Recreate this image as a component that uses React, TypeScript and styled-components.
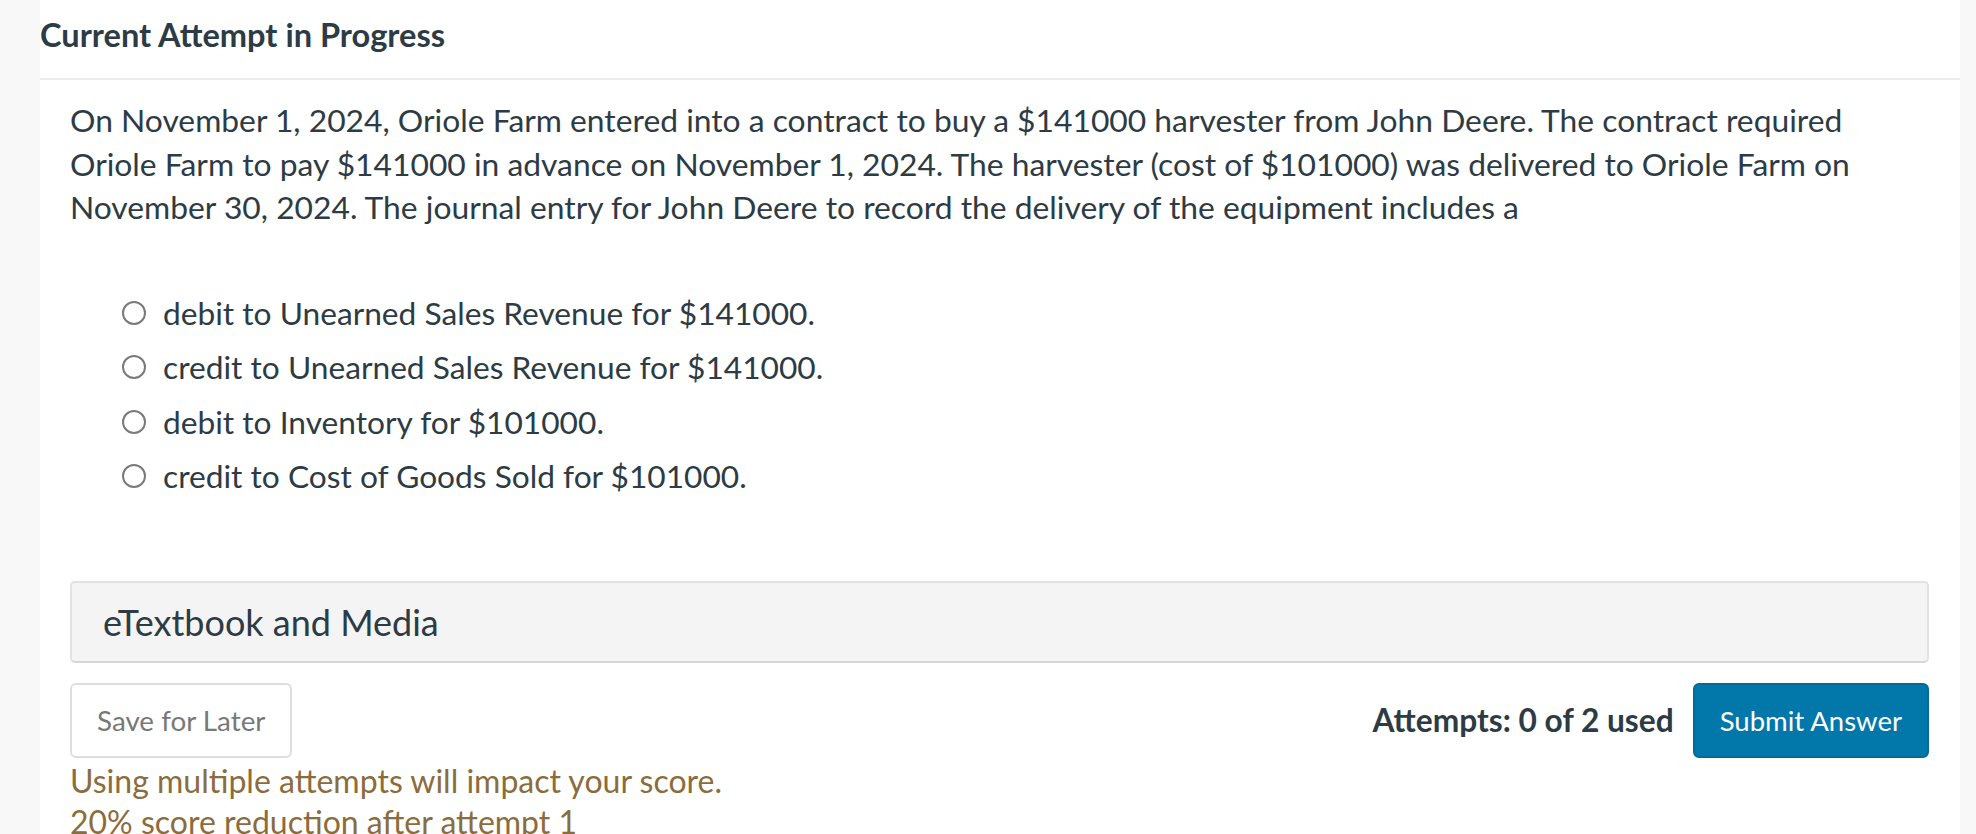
import styled, { createGlobalStyle } from 'styled-components';

const GlobalStyle = createGlobalStyle`
  html, body {
    margin: 0;
    padding: 0;
    background: #ffffff;
    font-family: Lato, "Open Sans", Arial, sans-serif;
    color: #2d3b45;
  }
  * {
    box-sizing: border-box;
  }
`;

const Page = styled.div`
  display: flex;
  width: 1976px;
  height: 834px;
  overflow: hidden;
  background: #ffffff;
`;

const Gutter = styled.div<{ $width: number }>`
  flex: 0 0 ${(p) => p.$width}px;
  background: #f8f8f8;
`;

const Main = styled.main`
  flex: 1;
  display: flex;
  flex-direction: column;
  min-width: 0;
`;

const Header = styled.header`
  height: 80px;
  flex: 0 0 auto;
  display: flex;
  align-items: center;
  padding: 0 0 9px 0;
  border-bottom: 2px solid #ececec;
`;

const Title = styled.h2`
  margin: 0;
  font-size: 32.6px;
  font-weight: 700;
  color: #2d3b45;
`;

const Body = styled.section`
  padding: 19px 31px 0 30px;
`;

const Question = styled.p`
  margin: 0;
  font-size: 31.8px;
  line-height: 43.5px;
  color: #2d3b45;
`;

const Options = styled.ul`
  list-style: none;
  margin: 56px 0 0 0;
  padding: 0 0 0 52px;
  display: flex;
  flex-direction: column;
`;

const Option = styled.li`
  display: flex;
  align-items: center;
  height: 54.5px;
  font-size: 31.7px;
  color: #2d3b45;
`;

const Radio = styled.input.attrs({ type: 'radio' })`
  appearance: none;
  margin: 0 17px 0 0;
  width: 24px;
  height: 24px;
  border: 2px solid #7a7a7a;
  border-radius: 50%;
  background: #ffffff;
  flex: 0 0 auto;
`;

const MediaPanel = styled.div`
  margin-top: 77px;
  height: 82px;
  display: flex;
  align-items: center;
  padding-left: 31px;
  background: #f4f4f4;
  border: 2px solid #e2e2e2;
  border-bottom-color: #d6d6d6;
  border-radius: 5px;
  font-size: 36px;
  color: #2d3b45;
`;

const Footer = styled.div`
  margin-top: 20px;
  display: flex;
  align-items: center;
  justify-content: space-between;
`;

const Button = styled.button<{ $primary?: boolean }>`
  height: 75px;
  padding: 0 25px;
  font-family: Lato, "Open Sans", Arial, sans-serif;
  font-size: ${(p) => (p.$primary ? 27.5 : 27.8)}px;
  border-radius: 6px;
  cursor: pointer;
  border: 2px solid ${(p) => (p.$primary ? '#026a99' : '#dedede')};
  background: ${(p) => (p.$primary ? '#0277aa' : '#ffffff')};
  color: ${(p) => (p.$primary ? '#ffffff' : '#787878')};
`;

const Actions = styled.div`
  display: flex;
  align-items: center;
  gap: 19px;
`;

const Attempts = styled.span`
  font-size: 31.7px;
  font-weight: 700;
  color: #2d3b45;
`;

const Warning = styled.p`
  margin: 2px 0 0 0;
  font-size: 32px;
  line-height: 41px;
  color: #8b6c3c;
`;

const options = [
  'debit to Unearned Sales Revenue for $141000.',
  'credit to Unearned Sales Revenue for $141000.',
  'debit to Inventory for $101000.',
  'credit to Cost of Goods Sold for $101000.',
];

export default function App() {
  return (
    <>
      <GlobalStyle />
      <Page>
        <Gutter $width={40} />
        <Main>
          <Header>
            <Title>Current Attempt in Progress</Title>
          </Header>
          <Body>
            <Question>
              On November 1, 2024, Oriole Farm entered into a contract to buy a $141000 harvester from
              John Deere. The contract required Oriole Farm to pay $141000 in advance on November 1,
              2024. The harvester (cost of $101000) was delivered to Oriole Farm on November 30, 2024.
              The journal entry for John Deere to record the delivery of the equipment includes a
            </Question>
            <Options>
              {options.map((text) => (
                <Option key={text}>
                  <Radio name="answer" />
                  {text}
                </Option>
              ))}
            </Options>
            <MediaPanel>eTextbook and Media</MediaPanel>
            <Footer>
              <Button>Save for Later</Button>
              <Actions>
                <Attempts>Attempts: 0 of 2 used</Attempts>
                <Button $primary>Submit Answer</Button>
              </Actions>
            </Footer>
            <Warning>
              Using multiple attempts will impact your score.
              <br />
              20% score reduction after attempt 1
            </Warning>
          </Body>
        </Main>
        <Gutter $width={16} />
      </Page>
    </>
  );
}
